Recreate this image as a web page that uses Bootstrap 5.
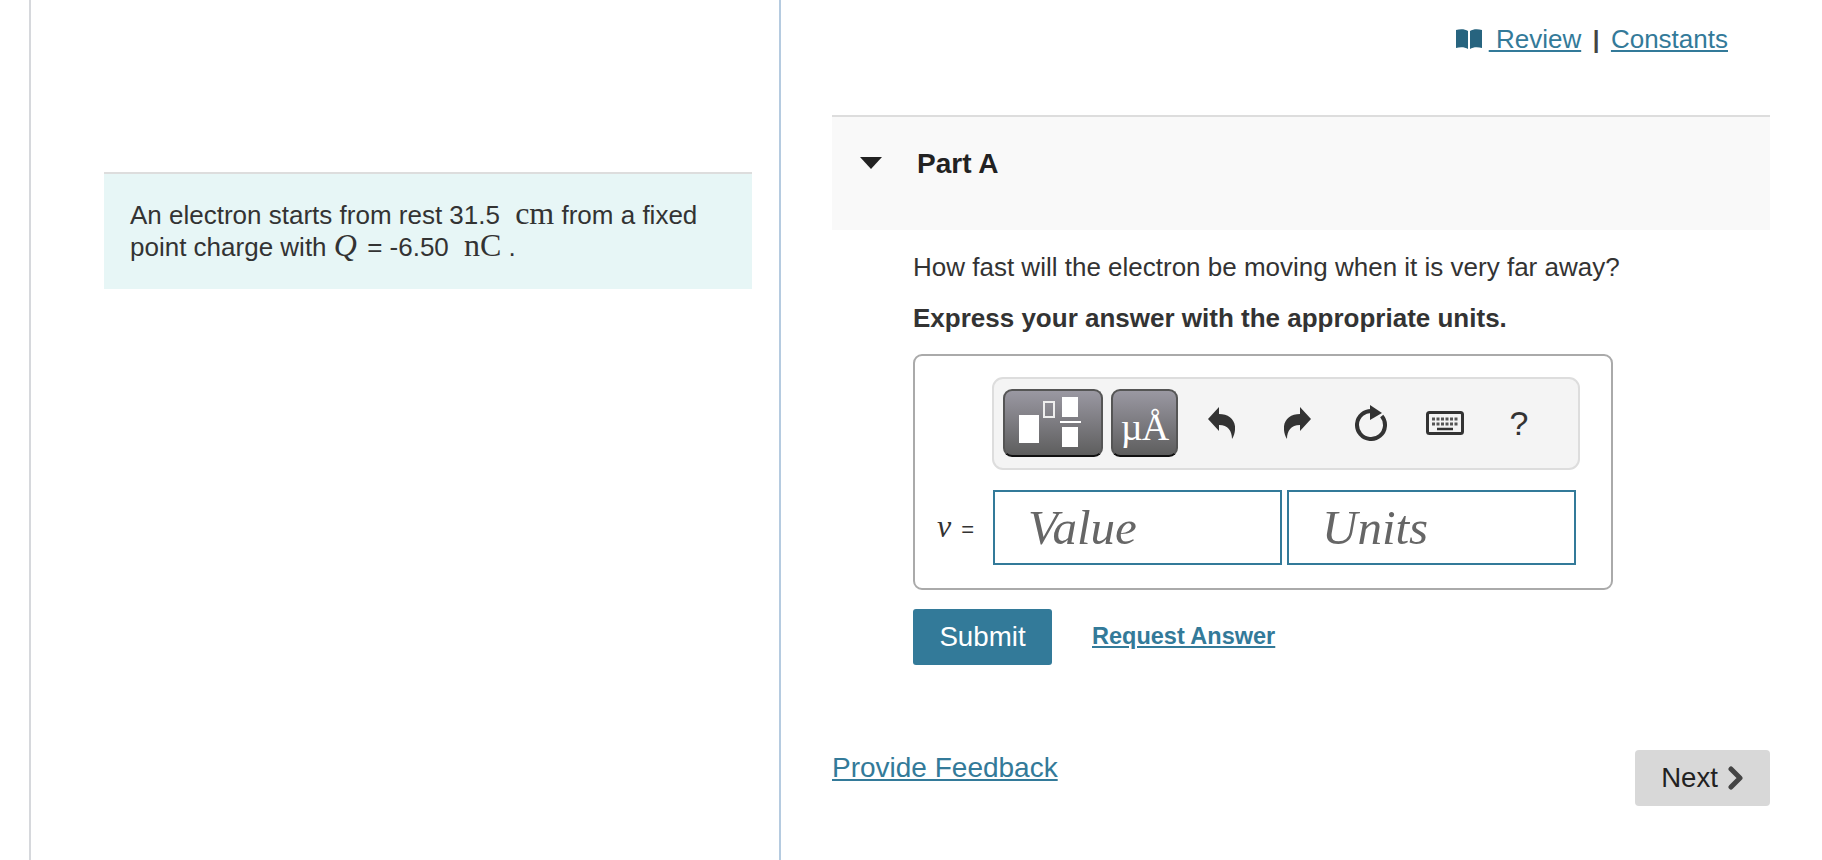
<!DOCTYPE html>
<html lang="en">

<head>
    <meta charset="UTF-8">
    <title>Part A</title>
    <link href="https://cdn.jsdelivr.net/npm/bootstrap@5.3.0/dist/css/bootstrap.min.css" rel="stylesheet">
    <style>
        body { font-family: "Liberation Sans", Arial, sans-serif; font-size: 26px; line-height: 32px; color: #333; background: #fff; height: 860px; overflow: hidden; }
        a { color: #337a99; }
        .math { font-family: "Liberation Serif", serif; font-size: 32px; line-height: 0; }
        .math-q { margin-right: 3px; }
        .left-pane { margin-left: 29px; width: 752px; height: 860px; padding-top: 172px; border-left: 2px solid #d6d8dc; border-right: 2px solid #b5cbe0; flex: none; }
        .intro { margin-left: 73px; width: 648px; height: 117px; padding: 25px 26px 0; background: #e7f6f6; border-top: 2px solid #ddd; }
        .right-pane { padding-left: 51px; width: 989px; flex: none; }
        .top-links { padding: 23px 42px 0 0; height: 115px; }
        .top-links svg { margin-right: 7px; vertical-align: -1px; }
        .sep { margin: 0 11.5px; font-size: 24px; font-weight: 700; color: #444; }
        .part-head { height: 115px; padding: 31px 0 0 28px; background: #f9f9f9; border-top: 2px solid #ddd; font-size: 28px; font-weight: 700; color: #222; gap: 35px; }
        .caret-down { width: 0; height: 0; margin-top: 9px; border-left: 11px solid transparent; border-right: 11px solid transparent; border-top: 12px solid #222; }
        .part-body { padding-left: 81px; }
        .part-body p { margin: 21px 0 0; }
        .part-body p + p { margin-top: 19px; }
        .answer-box { width: 700px; height: 236px; margin-top: 20px; padding: 21px 0 0 77px; border: 2px solid #aaa; border-radius: 9px; }
        .tools { width: 588px; height: 93px; padding: 10px 8px 0 9px; gap: 8px; background: #f4f4f4; border: 2px solid #ddd; border-radius: 11px; }
        .tool-btn { height: 68px; padding: 0; background: linear-gradient(#9a98a2, #5e5e5e); border: 2px solid #555; border-bottom-color: #111; border-radius: 9px; }
        .tool-frac { width: 100px; }
        .tool-units { width: 67px; color: #fff; font-family: "Liberation Serif", serif; font-size: 38px; line-height: 1; padding-top: 8px; letter-spacing: -1px; }
        .tool-row { margin-left: -3px; }
        .tool-slot { width: 74px; height: 68px; color: #333; }
        .tool-slot:first-child { width: 77px; }
        .help-mark { font-size: 34px; }
        .entry { margin: 20px 0 0 -77px; gap: 5px; }
        .var-label { width: 72px; padding-right: 13px; margin-right: 1px; font-size: 22px; white-space: nowrap; }
        .var-label i { margin-right: 10px; font-family: "Liberation Serif", serif; font-size: 32px; }
        .entry .form-control { width: 289px; height: 75px; padding: 0 0 0 33px; border: 2px solid #337a99; border-radius: 0; font-family: "Liberation Serif", serif; font-style: italic; font-size: 49px; }
        .entry .form-control::placeholder { color: #666; opacity: 1; }
        .actions { margin-top: 19px; gap: 40px; }
        .btn-submit { width: 139px; height: 56px; padding: 0; background: #337a99; border: 0; border-radius: 3px; color: #fff; font-size: 27.7px; }
        .req-link { margin-top: -2px; font-size: 23.5px; font-weight: 700; }
        .page-foot { width: 938px; margin-top: 85px; }
        .feedback { margin-top: 2px; font-size: 28px; }
        .btn-next { width: 135px; height: 56px; padding: 0; background: #d8d8d8; border: 0; border-radius: 4px; color: #222; font-size: 27.6px; gap: 10px; }
    </style>
</head>

<body>

    <div class="d-flex">
        <div class="left-pane">
            <div class="intro">An electron starts from rest 31.5 <span class="math">&nbsp;cm</span> from a fixed point charge with <i class="math math-q">Q</i> = -6.50 <span class="math">&nbsp;nC</span> .</div>
        </div>

        <div class="right-pane">
            <div class="top-links text-end">
                <svg width="26" height="20" viewBox="0 0 26 20"><path fill="#27647f" d="M0 1c4-1 9-1 12 1v18c-3-2-8-2-12-1zM26 1c-4-1-9-1-12 1v18c3-2 8-2 12-1z"/></svg><a href="#">&nbsp;Review</a><span class="sep">|</span><a href="#">Constants</a>
            </div>

            <div class="part-head d-flex align-items-start">
                <span class="caret-down"></span>
                <span>Part A</span>
            </div>

            <div class="part-body">
                <p>How fast will the electron be moving when it is very far away?</p>
                <p class="fw-bold">Express your answer with the appropriate units.</p>

                <div class="answer-box">
                    <div class="tools d-flex align-items-start">
                        <button class="btn tool-btn tool-frac d-flex" type="button">
                            <svg width="96" height="64" viewBox="0 0 96 64" fill="#fff">
                                <path d="M14 24h20v28H14z"/>
                                <path fill="none" stroke="#eee" stroke-width="2" d="M39 11h10v15H39z"/>
                                <path d="M57 6h16v20H57zM55 30h21v2H55zM57 36h16v20H57z"/>
                            </svg>
                        </button>
                        <button class="btn tool-btn tool-units" type="button">µÅ</button>
                        <div class="tool-row d-flex">
                            <div class="tool-slot d-flex align-items-center justify-content-center">
                                <svg width="27" height="32" viewBox="0 0 27 32" fill="#333"><path d="M0 12 11 0v7c10 0 17 6 16 16-.3 3-1 6-3 9 0-8-4-14-13-14v6z"/></svg>
                            </div>
                            <div class="tool-slot d-flex align-items-center justify-content-center">
                                <svg width="27" height="32" viewBox="0 0 27 32" fill="#333"><path d="M27 12 16 0v7C6 7-1 13 0 23c.3 3 1 6 3 9 0-8 4-14 13-14v6z"/></svg>
                            </div>
                            <div class="tool-slot d-flex align-items-center justify-content-center">
                                <svg width="32" height="36" viewBox="0 0 32 36"><circle cx="16" cy="20" r="14" fill="none" stroke="#333" stroke-width="4" stroke-dasharray="76 12" transform="rotate(-40 16 20)"/><path fill="#333" d="M15 0l12 8-12 7z"/></svg>
                            </div>
                            <div class="tool-slot d-flex align-items-center justify-content-center">
                                <svg width="38" height="24" viewBox="0 0 38 24"><rect x="1.5" y="1.5" width="35" height="21" rx="2" fill="#f4f4f4" stroke="#333" stroke-width="3"/><path stroke="#555" stroke-width="3" stroke-dasharray="3 1.5" d="M6 8h26M6 13h26"/><path stroke="#333" stroke-width="2.5" d="M11 18h16"/></svg>
                            </div>
                            <div class="tool-slot help-mark d-flex align-items-center justify-content-center">?</div>
                        </div>
                    </div>

                    <div class="entry d-flex align-items-center">
                        <div class="var-label text-end"><i>v</i>=</div>
                        <input type="text" class="form-control" placeholder="Value">
                        <input type="text" class="form-control" placeholder="Units">
                    </div>
                </div>

                <div class="actions d-flex align-items-center">
                    <button class="btn btn-submit" type="button">Submit</button>
                    <a href="#" class="req-link">Request Answer</a>
                </div>
            </div>

            <div class="page-foot d-flex justify-content-between align-items-start">
                <a href="#" class="feedback">Provide Feedback</a>
                <button class="btn btn-next d-flex align-items-center justify-content-center" type="button">Next <svg width="16" height="24" viewBox="0 0 16 24"><path fill="none" stroke="#444" stroke-width="5" stroke-linecap="round" stroke-linejoin="round" d="M3 3l9 9-9 9"/></svg></button>
            </div>
        </div>
    </div>

</body>

</html>
